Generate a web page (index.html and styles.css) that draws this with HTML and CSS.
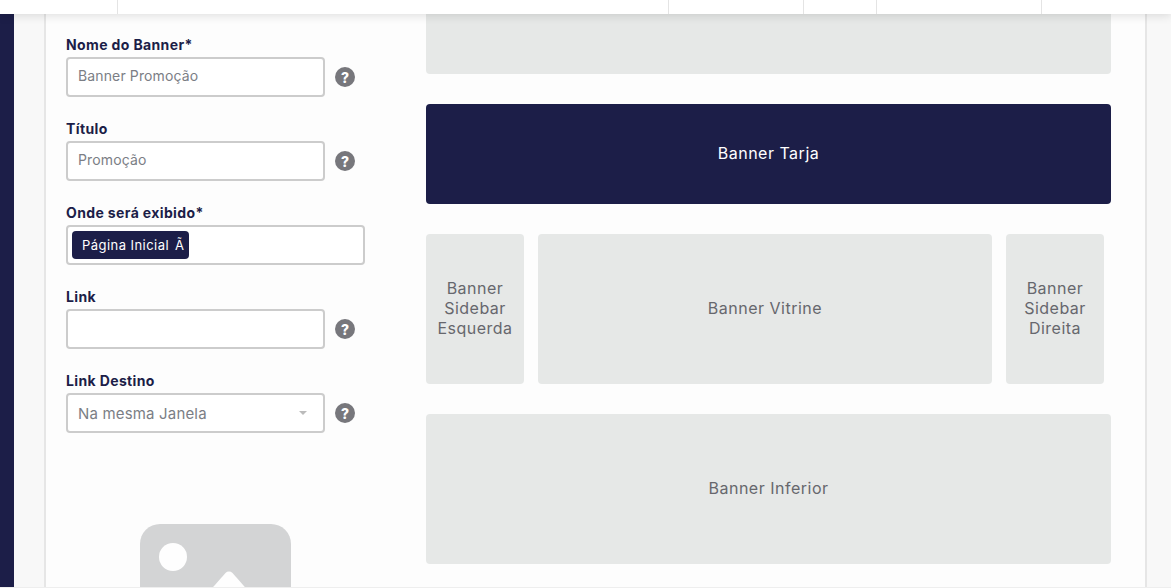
FILE: index.html
```html
<!DOCTYPE html>
<html lang="pt-BR">
<head>
    <meta charset="UTF-8">
    <title>Banner</title>
    <link rel="stylesheet" href="styles.css">
</head>
<body>
    <div class="topbar">
        <div class="topbar-cell cell-a"></div>
        <div class="topbar-cell cell-b"></div>
        <div class="topbar-cell cell-c"></div>
        <div class="topbar-cell cell-d"></div>
        <div class="topbar-cell cell-e"></div>
        <div class="topbar-cell cell-f"></div>
    </div>

    <div class="page">
        <div class="sidebar"></div>
        <div class="card">
            <div class="form-col">
                <div class="field">
                    <label class="field-label">Nome do Banner*</label>
                    <div class="field-row">
                        <input class="input" type="text" placeholder="Banner Promoção">
                        <span class="help">?</span>
                    </div>
                </div>
                <div class="field">
                    <label class="field-label">Título</label>
                    <div class="field-row">
                        <input class="input" type="text" placeholder="Promoção">
                        <span class="help">?</span>
                    </div>
                </div>
                <div class="field">
                    <label class="field-label">Onde será exibido*</label>
                    <div class="multi">
                        <span class="tag">Página Inicial<span class="tag-x">Ã</span></span>
                    </div>
                </div>
                <div class="field">
                    <label class="field-label">Link</label>
                    <div class="field-row">
                        <input class="input" type="text">
                        <span class="help">?</span>
                    </div>
                </div>
                <div class="field">
                    <label class="field-label">Link Destino</label>
                    <div class="field-row">
                        <div class="input select">
                            <span>Na mesma Janela</span>
                            <span class="caret"></span>
                        </div>
                        <span class="help">?</span>
                    </div>
                </div>

                <svg class="placeholder" viewBox="0 0 151 130" width="151" height="130">
                    <path fill="#d3d4d5" d="M20 0h111a20 20 0 0 1 20 20v110H0V20A20 20 0 0 1 20 0z"/>
                    <circle cx="33" cy="33" r="14" fill="#fefefe"/>
                    <path fill="#fefefe" d="M85.5 49a5 5 0 0 1 7 0L164 130H14z"/>
                </svg>
            </div>

            <div class="preview-col">
                <div class="banner banner-top"></div>
                <div class="banner banner-tarja">Banner Tarja</div>
                <div class="banner-row">
                    <div class="banner">Banner Sidebar Esquerda</div>
                    <div class="banner">Banner Vitrine</div>
                    <div class="banner">Banner Sidebar Direita</div>
                </div>
                <div class="banner banner-inferior">Banner Inferior</div>
            </div>
        </div>
    </div>
</body>
</html>
```

FILE: styles.css
```css
* {
    box-sizing: border-box;
}

body {
    margin: 0;
    height: 588px;
    overflow: hidden;
    background-color: #f8f8f8;
    font-family: 'Inter', 'Open Sans', sans-serif;
    color: #1c1e48;
    display: flex;
    flex-direction: column;
}

.topbar {
    height: 14px;
    flex: none;
    display: flex;
    background-color: #ffffff;
    box-shadow: 0 2px 10px rgba(0, 0, 0, 0.12);
    position: relative;
    z-index: 2;
}

.topbar-cell {
    border-right: 1px solid #e4e4e4;
}

.cell-a { width: 118px; }
.cell-b { width: 551px; }
.cell-c { width: 135px; }
.cell-d { width: 73px; }
.cell-e { width: 165px; }
.cell-f { border-right: 0; flex: 1; }

.page {
    flex: 1;
    display: flex;
    min-height: 0;
    border-bottom: 1px solid #eeeeee;
}

.sidebar {
    width: 14px;
    flex: none;
    background-color: #1c1e48;
    margin-right: 30px;
}

.card {
    width: 1103px;
    flex: none;
    display: flex;
    background-color: #fdfdfd;
    border-left: 2px solid #e6e6e6;
    border-right: 2px solid #e6e6e6;
    padding-left: 20px;
    overflow: hidden;
}

.form-col {
    width: 360px;
    flex: none;
    padding-top: 21px;
}

.field {
    margin-bottom: 22px;
}

.field-label {
    display: block;
    height: 22px;
    line-height: 20px;
    font-size: 14px;
    font-weight: 700;
    letter-spacing: 0.37px;
}

.field-row {
    display: flex;
    align-items: center;
    gap: 10px;
}

.input {
    width: 259px;
    height: 40px;
    padding: 0 10px 3px;
    border: 2px solid #cccccc;
    border-radius: 4px;
    background-color: #ffffff;
    font-family: inherit;
    font-size: 14px;
    letter-spacing: 0.13px;
    color: #7b7e85;
    outline: none;
}

.input::placeholder {
    color: #7b7e85;
    opacity: 1;
}

.select {
    display: flex;
    align-items: center;
    justify-content: space-between;
    padding: 0 16px 0 10px;
    font-size: 15px;
    letter-spacing: 0.17px;
}

.caret {
    width: 0;
    height: 0;
    border-left: 4px solid transparent;
    border-right: 4px solid transparent;
    border-top: 4px solid #bbbbbb;
}

.help {
    width: 20px;
    height: 20px;
    flex: none;
    border-radius: 50%;
    background-color: #77777c;
    color: #ffffff;
    font-size: 14px;
    font-weight: 800;
    display: flex;
    align-items: center;
    justify-content: center;
}

.multi {
    width: 299px;
    height: 40px;
    padding: 4px;
    border: 2px solid #cccccc;
    border-radius: 4px;
    background-color: #ffffff;
}

.tag {
    display: inline-flex;
    align-items: center;
    height: 28px;
    width: 117px;
    padding: 0 0 1px 10px;
    border-radius: 4px;
    background-color: #1c1e48;
    color: #ffffff;
    font-size: 13px;
    letter-spacing: 0.45px;
}

.tag-x {
    margin-left: 6px;
}

.placeholder {
    display: block;
    margin-top: 91px;
    margin-left: 74px;
}

.preview-col {
    width: 685px;
    flex: none;
    display: flex;
    flex-direction: column;
    gap: 30px;
}

.banner {
    display: flex;
    align-items: center;
    justify-content: center;
    text-align: center;
    padding: 0 8px 2px;
    border-radius: 4px;
    background-color: #e6e8e7;
    color: #66676d;
    font-size: 16px;
    line-height: 20px;
    letter-spacing: 0.5px;
}

.banner-top {
    height: 60px;
    border-radius: 0 0 4px 4px;
}

.banner-tarja {
    height: 100px;
    background-color: #1c1e48;
    color: #ffffff;
}

.banner-row {
    display: grid;
    grid-template-columns: 98px 454px 98px;
    gap: 14px;
    height: 150px;
}

.banner-inferior {
    height: 150px;
    flex: none;
}
```
